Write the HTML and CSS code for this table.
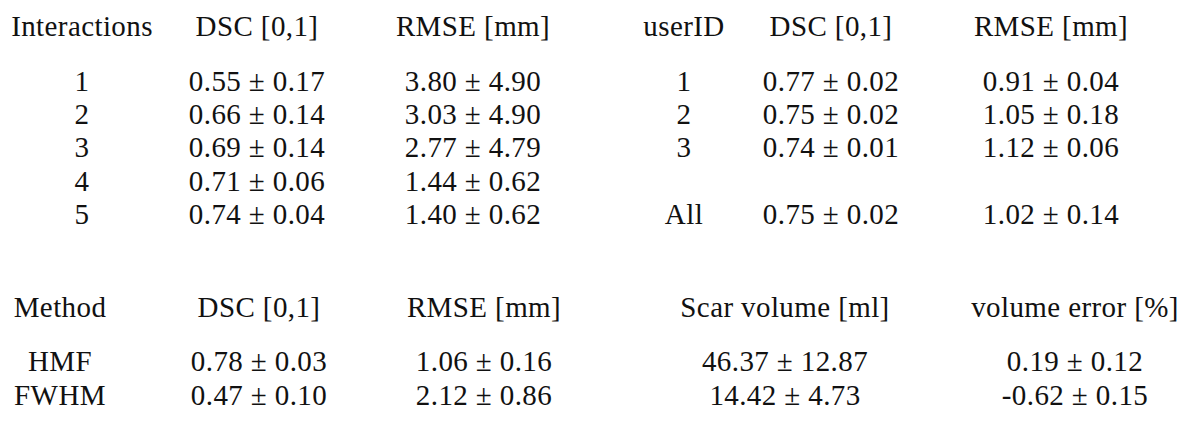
FILE: index.html
```html
<!DOCTYPE html>
<html lang="en">
<head>
  <meta charset="UTF-8">
  <meta name="viewport" content="width=device-width, initial-scale=1.0">
  <title>Segmentation results</title>
  <link rel="stylesheet" href="styles.css">
</head>
<body>
  <div class="top">
    <div class="table t-inter">
      <div class="head">Interactions</div>
      <div class="head">DSC [0,1]</div>
      <div class="head">RMSE [mm]</div>

      <div>1</div><div>0.55 ± 0.17</div><div>3.80 ± 4.90</div>
      <div>2</div><div>0.66 ± 0.14</div><div>3.03 ± 4.90</div>
      <div>3</div><div>0.69 ± 0.14</div><div>2.77 ± 4.79</div>
      <div>4</div><div>0.71 ± 0.06</div><div>1.44 ± 0.62</div>
      <div>5</div><div>0.74 ± 0.04</div><div>1.40 ± 0.62</div>
    </div>

    <div class="table t-user">
      <div class="head">userID</div>
      <div class="head">DSC [0,1]</div>
      <div class="head">RMSE [mm]</div>

      <div>1</div><div>0.77 ± 0.02</div><div>0.91 ± 0.04</div>
      <div>2</div><div>0.75 ± 0.02</div><div>1.05 ± 0.18</div>
      <div>3</div><div>0.74 ± 0.01</div><div>1.12 ± 0.06</div>
      <div></div><div></div><div></div>
      <div>All</div><div>0.75 ± 0.02</div><div>1.02 ± 0.14</div>
    </div>
  </div>

  <div class="table t-method">
    <div class="head">Method</div>
    <div class="head">DSC [0,1]</div>
    <div class="head">RMSE [mm]</div>
    <div class="head">Scar volume [ml]</div>
    <div class="head">volume error [%]</div>

    <div>HMF</div><div>0.78 ± 0.03</div><div>1.06 ± 0.16</div><div>46.37 ± 12.87</div><div>0.19 ± 0.12</div>
    <div>FWHM</div><div>0.47 ± 0.10</div><div>2.12 ± 0.86</div><div>14.42 ± 4.73</div><div>-0.62 ± 0.15</div>
  </div>
</body>
</html>
```

FILE: styles.css
```css
body {
  font-family: "Liberation Serif", "Times New Roman", serif;
  font-size: 29px;
  letter-spacing: 0.4px;
  line-height: 33.5px;
  color: #111;
  background: #fff;
  margin: 0;
  padding: 10px 8px 0;
  overflow: hidden;
}
.top {
  display: flex;
  gap: 32px;
}
.table {
  display: grid;
  justify-items: center;
  white-space: nowrap;
}
.t-inter {
  grid-template-columns: 148px 202px 230px;
  grid-template-rows: 54.5px;
  grid-auto-rows: 33.4px;
}
.t-user {
  grid-template-columns: 128px 166px 274px;
  grid-template-rows: 54.5px;
  grid-auto-rows: 33.4px;
}
.t-method {
  margin-top: 60px;
  grid-template-columns: 104px 294px 156px 446px 134px;
  grid-template-rows: 54px;
  grid-auto-rows: 34px;
}
```
